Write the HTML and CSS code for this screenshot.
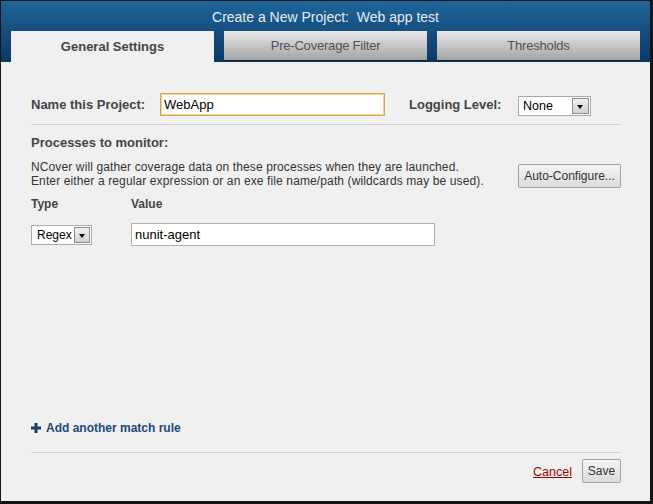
FILE: index.html
```html
<!DOCTYPE html>
<html lang="en">
<head>
<meta charset="utf-8">
<title>Create a New Project</title>
<link rel="stylesheet" href="styles.css">
</head>
<body>
<div class="dialog">
  <header class="dialog-head">
    <h1 class="dialog-title">Create a New Project:&nbsp; Web app test</h1>
    <nav class="tabs">
      <a class="tab tab-active">General Settings</a>
      <a class="tab">Pre-Coverage Filter</a>
      <a class="tab">Thresholds</a>
    </nav>
  </header>

  <main class="panel">
    <div class="row-top">
      <label class="field-label name-label">Name this Project:</label>
      <input class="text-input name-input" type="text" value="WebApp">
      <label class="field-label level-label">Logging Level:</label>
      <div class="select select-level">
        <span class="select-value">None</span>
        <span class="select-arrow"></span>
      </div>
    </div>

    <hr class="rule">

    <h2 class="section-title">Processes to monitor:</h2>
    <div class="section-intro">
      <p class="intro-text">NCover will gather coverage data on these processes when they are launched.<br>Enter either a regular expression or an exe file name/path (wildcards may be used).</p>
      <button class="btn btn-auto" type="button">Auto-Configure...</button>
    </div>

    <div class="rules-head">
      <span class="col-type">Type</span>
      <span class="col-value">Value</span>
    </div>
    <div class="rule-row">
      <div class="col-type">
        <div class="select select-type">
          <span class="select-value">Regex</span>
          <span class="select-arrow"></span>
        </div>
      </div>
      <input class="text-input value-input" type="text" value="nunit-agent">
    </div>

    <div class="panel-foot">
      <a class="add-rule">
        <svg class="add-icon" width="10" height="10" viewBox="0 0 10 10" aria-hidden="true">
          <rect x="3.5" y="0" width="3" height="10" fill="currentColor"/>
          <rect x="0" y="3.5" width="10" height="3" fill="currentColor"/>
        </svg>
        Add another match rule
      </a>
      <hr class="rule">
      <div class="actions">
        <a class="cancel">Cancel</a>
        <button class="btn btn-save" type="button">Save</button>
      </div>
    </div>
  </main>
</div>
</body>
</html>
```

FILE: styles.css
```css
* {
  box-sizing: border-box;
}

html, body {
  margin: 0;
  padding: 0;
  background: #f0f0f0;
}

body {
  font-family: "Liberation Sans", Arial, sans-serif;
  color: #333;
}

.dialog {
  width: 653px;
  height: 504px;
  display: flex;
  flex-direction: column;
  border-style: solid;
  border-color: #141414;
  border-width: 1px 3px 3px 1px;
}

/* ---- header with title and tabs ---- */
.dialog-head {
  height: 61px;
  background: linear-gradient(#1e6699, #0b3665);
  display: flex;
  flex-direction: column;
}

.dialog-title {
  margin: 0;
  height: 30px;
  line-height: 32px;
  text-align: center;
  font-size: 14px;
  font-weight: normal;
  color: #e6edf4;
}

.tabs {
  height: 31px;
  display: flex;
  gap: 10px;
  padding: 0 10px;
}

.tab {
  flex: 1;
  height: 30px;
  line-height: 30px;
  text-align: center;
  font-size: 13px;
  letter-spacing: -0.2px;
  color: #50505a;
  background: linear-gradient(#e9e9e9, #a4a4a4);
  border-bottom: 1px solid #1c1c1c;
}

.tab-active {
  height: 31px;
  line-height: 31px;
  font-weight: bold;
  letter-spacing: 0;
  color: #444;
  background: #f0f0f0;
  border-bottom: none;
}

/* ---- content panel ---- */
.panel {
  flex: 1;
  display: flex;
  flex-direction: column;
  background: #f0f0f0;
  padding: 31px 29px 18px 30px;
}

.field-label {
  font-size: 13px;
  font-weight: bold;
  color: #444;
}

.row-top {
  display: flex;
  align-items: center;
  height: 23px;
}

.name-label {
  width: 129px;
}

.text-input {
  font-family: "Liberation Sans", Arial, sans-serif;
  font-size: 13px;
  color: #000;
  background: #fff;
  border: 1px solid #b5b5b5;
  padding: 0 3px;
  margin: 0;
  outline: none;
}

.name-input {
  width: 225px;
  height: 23px;
  border-color: #d6a548;
  box-shadow: inset 0 0 0 1px #f2d597;
}

.level-label {
  margin-left: 24px;
  width: 109px;
}

.select {
  display: flex;
  align-items: center;
  justify-content: space-between;
  height: 20px;
  background: #fff;
  border: 1px solid #a9a9a9;
  padding: 0 1px 0 4px;
  font-size: 12.5px;
  color: #000;
}

.select-level {
  width: 73px;
  margin-top: 3px;
}

.select-type {
  width: 61px;
  font-size: 12px;
  padding-left: 5px;
  padding-right: 1px;
}

.select-arrow {
  position: relative;
  flex: none;
  width: 17px;
  height: 16px;
  border: 1px solid #8d8d8d;
  background: linear-gradient(#f0f0f0, #d2d2d2);
}

.select-type .select-arrow {
  width: 16px;
}

.select-arrow::after {
  content: "";
  position: absolute;
  left: 3.5px;
  top: 6px;
  border-left: 3.5px solid transparent;
  border-right: 3.5px solid transparent;
  border-top: 4px solid #000;
}

.rule {
  border: none;
  height: 1px;
  margin: 8px 0 0;
  background: #d2d2d2;
}

.section-title {
  margin: 10px 0 0;
  font-size: 13px;
  line-height: 16px;
  font-weight: bold;
  color: #444;
}

.section-intro {
  display: flex;
  align-items: flex-end;
  justify-content: space-between;
  margin-top: 9px;
}

.intro-text {
  margin: 0;
  font-size: 12px;
  line-height: 14px;
  letter-spacing: 0.12px;
  color: #333;
}

.btn {
  font-family: "Liberation Sans", Arial, sans-serif;
  font-size: 12px;
  color: #333;
  height: 24px;
  padding: 0;
  border: 1px solid #a3a3a3;
  border-radius: 2px;
  background: linear-gradient(#f5f5f5, #dcdcdc);
}

.btn-auto {
  width: 103px;
}

.rules-head {
  display: flex;
  margin-top: 9px;
  font-size: 12px;
  line-height: 14px;
  font-weight: bold;
  color: #444;
}

.col-type {
  width: 100px;
  flex: none;
}

.rule-row {
  display: flex;
  align-items: center;
  margin-top: 12px;
}

.value-input {
  width: 304px;
  height: 23px;
  border-color: #b0b0b0;
}

/* ---- footer ---- */
.panel-foot {
  margin-top: auto;
  display: flex;
  flex-direction: column;
}

.add-rule {
  display: flex;
  align-items: center;
  gap: 5px;
  font-size: 12px;
  line-height: 16px;
  font-weight: bold;
  color: #1d4a74;
  cursor: pointer;
}

.add-icon {
  color: #163f66;
  flex: none;
}

.panel-foot .rule {
  margin-top: 16px;
}

.actions {
  display: flex;
  justify-content: flex-end;
  align-items: center;
  gap: 10px;
  margin-top: 6px;
}

.cancel {
  font-size: 12.5px;
  color: #a10000;
  text-decoration: underline;
  cursor: pointer;
  margin-top: 2px;
}

.btn-save {
  width: 39px;
}
```
